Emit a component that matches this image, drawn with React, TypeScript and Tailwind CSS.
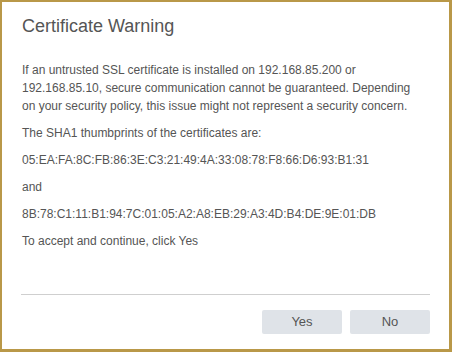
export default function App() {
  return (
    <div className="w-[452px] h-[352px] bg-white border-l-2 border-t-2 border-r-[3px] border-b-[3px] border-[#b99848] flex flex-col text-[#555] font-['Liberation_Sans',Arial,sans-serif]">
      <div className="px-[20px] pt-[13px] text-[18px] leading-[22px] text-[#555]">Certificate Warning</div>
      <div className="px-[20px] pt-[24px] text-[12px] leading-[18px] flex flex-col gap-[9px] text-[#555]">
        <p className="max-w-[392px]">
          If an untrusted SSL certificate is installed on 192.168.85.200 or 192.168.85.10, secure communication cannot be guaranteed. Depending on your security policy, this issue might not represent a security concern.
        </p>
        <p>The SHA1 thumbprints of the certificates are:</p>
        <p>05:EA:FA:8C:FB:86:3E:C3:21:49:4A:33:08:78:F8:66:D6:93:B1:31</p>
        <p>and</p>
        <p>8B:78:C1:11:B1:94:7C:01:05:A2:A8:EB:29:A3:4D:B4:DE:9E:01:DB</p>
        <p>To accept and continue, click Yes</p>
      </div>
      <div className="flex-1" />
      <div className="mx-[19px] border-t border-[#cfcfcf]" />
      <div className="flex justify-end gap-[8px] px-[19px] pt-[15px] pb-[15px]">
        <button className="w-[80px] h-[24px] rounded-[2px] bg-[#dfe3e8] text-[13px] text-[#555]">Yes</button>
        <button className="w-[80px] h-[24px] rounded-[2px] bg-[#dfe3e8] text-[13px] text-[#555]">No</button>
      </div>
    </div>
  );
}
